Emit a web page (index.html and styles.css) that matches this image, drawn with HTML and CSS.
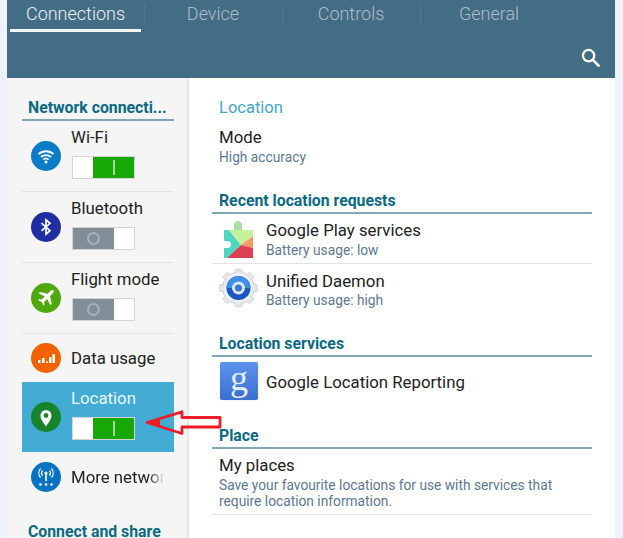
FILE: index.html
```html
<!DOCTYPE html>
<html lang="en">
<head>
<meta charset="utf-8">
<title>Settings</title>
<link rel="stylesheet" href="styles.css">
</head>
<body>
<div class="app">
  <header class="header">
    <nav class="tabs">
      <div class="tab active">Connections</div>
      <div class="tab">Device</div>
      <div class="tab">Controls</div>
      <div class="tab">General</div>
    </nav>
    <div class="tools">
      <svg class="search" viewBox="0 0 20 20" width="19" height="19"><circle cx="8" cy="8" r="6" fill="none" stroke="#fff" stroke-width="2.400"/><path d="M12.500 12.500L18.500 18.500" stroke="#fff" stroke-width="2.800" stroke-linecap="round"/></svg>
    </div>
  </header>
  <div class="main">
    <aside class="side">
      <h2 class="side-head">Network connecti...</h2>
      <div class="row border">
        <span class="ic wifi"><svg viewBox="0 0 30 30" width="30" height="30"><g fill="none" stroke="#fff" stroke-width="1.800"><path d="M7.500 13.200a11 11 0 0 1 15 0"/><path d="M10 16a7.400 7.400 0 0 1 10 0"/><path d="M12.400 18.600a3.800 3.800 0 0 1 5.200 0"/></g><circle cx="15" cy="21" r="1.500" fill="#fff"/></svg></span>
        <div class="col"><div class="name">Wi-Fi</div><div class="sw on"><i class="knob"></i><i class="track"><b class="bar"></b></i></div></div>
      </div>
      <div class="row border">
        <span class="ic bt"><svg viewBox="0 0 30 30" width="30" height="30"><path d="M10.500 11.200L19 18.700L15 22.200V7.800L19 11.300L10.500 18.800" fill="none" stroke="#fff" stroke-width="1.700"/></svg></span>
        <div class="col"><div class="name">Bluetooth</div><div class="sw off"><i class="track"><b class="ring"></b></i><i class="knob"></i></div></div>
      </div>
      <div class="row border">
        <span class="ic fl"><svg viewBox="0 0 30 30" width="30" height="30"><path d="M22.500 7.200c-1-.6-2.300-.1-3.200.8l-2.700 2.700-7.700-1.700-1.300 1.300 6.200 3.300-3 3-2.700-.3-1 1 3.500 1.800 1.800 3.500 1-1-.3-2.700 3-3 3.300 6.200 1.300-1.300-1.700-7.700 2.700-2.700c.9-.9 1.400-2.200.8-3.200z" fill="#fff"/></svg></span>
        <div class="col"><div class="name">Flight mode</div><div class="sw off"><i class="track"><b class="ring"></b></i><i class="knob"></i></div></div>
      </div>
      <div class="row short">
        <span class="ic du"><svg viewBox="0 0 30 30" width="30" height="30"><g fill="#fff"><rect x="7" y="17" width="2.500" height="3"/><rect x="11" y="15" width="2.500" height="5"/><rect x="15" y="18.500" width="2" height="1.500"/><rect x="18" y="14" width="2.500" height="6"/><rect x="21.500" y="11" width="2.500" height="9"/></g></svg></span>
        <div class="name">Data usage</div>
      </div>
      <div class="row tall selected">
        <span class="ic loc"><svg viewBox="0 0 30 30" width="30" height="30"><path d="M15 24.500C12.500 20.500 9.500 17.500 9.500 13.500a5.500 5.500 0 0 1 11 0C20.500 17.500 17.500 20.500 15 24.500z" fill="#fff"/><circle cx="15" cy="13.500" r="2.400" fill="#15842a"/></svg></span>
        <div class="col"><div class="name">Location</div><div class="sw on"><i class="knob"></i><i class="track"><b class="bar"></b></i></div></div>
      </div>
      <div class="row short more">
        <span class="ic mn"><svg viewBox="0 0 30 30" width="30" height="30"><g fill="none" stroke="#fff" stroke-width="1.200"><path d="M11.500 13.500a4 4 0 0 1 0-5"/><path d="M18.500 8.500a4 4 0 0 1 0 5"/><path d="M9.500 15.500a7 7 0 0 1 0-9"/><path d="M20.500 6.500a7 7 0 0 1 0 9"/><path d="M15 11v8" stroke-width="1.600"/></g><circle cx="15" cy="11" r="1.600" fill="#fff"/><g fill="#fff"><circle cx="9.500" cy="22.500" r="1.300"/><circle cx="15" cy="22.500" r="1.300"/><circle cx="20.500" cy="22.500" r="1.300"/></g></svg></span>
        <div class="name clip">More networks</div>
      </div>
      <h2 class="side-head second">Connect and share</h2>
    </aside>
    <section class="content">
      <div class="page-title">Location</div>
      <div class="plain mode"><div class="name">Mode</div><div class="sub">High accuracy</div></div>
      <h3 class="sec recent">Recent location requests</h3>
      <div class="app-row border first">
        <svg class="app-ic play" viewBox="0 0 30 38" width="30" height="38"><defs><clipPath id="puzzle"><path d="M0 10h10V5c0-2.200 1.800-4 4-4s4 1.800 4 4v5h11v28H0V28h3.500c2 0 3.500-1.500 3.500-3.500S5.500 21 3.500 21H0z"/></clipPath></defs><g clip-path="url(#puzzle)"><rect width="30" height="11" fill="#a9e2a0"/><path d="M0 10h5l12 15L3 38H0z" fill="#4fd6be"/><path d="M5 10h24v6L17 25z" fill="#c6f09a"/><path d="M17 25l12-9v12z" fill="#f49b5f"/><path d="M17 25l12 3v10H3z" fill="#dd3f55"/></g></svg>
        <div><div class="name">Google Play services</div><div class="sub">Battery usage: low</div></div>
      </div>
      <div class="app-row">
        <svg class="app-ic gear" viewBox="0 0 40 40" width="41" height="40"><g fill="#e3e6ea" stroke="#bfc6cd" stroke-width=".6"><circle cx="20" cy="20" r="16"/><rect x="16.500" y="1" width="7" height="7" rx="1.500"/><rect x="16.500" y="32" width="7" height="7" rx="1.500"/><rect x="1" y="16.500" width="7" height="7" rx="1.500"/><rect x="32" y="16.500" width="7" height="7" rx="1.500"/><g transform="rotate(45 20 20)"><rect x="16.500" y="1" width="7" height="7" rx="1.500"/><rect x="16.500" y="32" width="7" height="7" rx="1.500"/><rect x="1" y="16.500" width="7" height="7" rx="1.500"/><rect x="32" y="16.500" width="7" height="7" rx="1.500"/></g></g><circle cx="20" cy="20" r="15" fill="#eef0f3"/><circle cx="20" cy="20" r="12" fill="#1c55c4"/><path d="M8 20a12 12 0 0 1 24 0z" fill="#3d8fe8"/><circle cx="20" cy="20" r="6.500" fill="#dfe8f2"/><circle cx="20" cy="20" r="3.500" fill="#3a78d0"/></svg>
        <div><div class="name">Unified Daemon</div><div class="sub">Battery usage: high</div></div>
      </div>
      <h3 class="sec services">Location services</h3>
      <div class="app-row single">
        <span class="gbox"><span class="g">g</span></span>
        <div class="name">Google Location Reporting</div>
      </div>
      <h3 class="sec place">Place</h3>
      <div class="plain places border"><div class="name">My places</div><div class="sub dense">Save your favourite locations for use with services that require location information.</div></div>
    </section>
  </div>
</div>
<svg class="arrow" viewBox="0 0 80 26" width="80" height="26"><path d="M3 12.500L38 1.800V7.500H76V17H38V23.500z" fill="none" stroke="#ee1c25" stroke-width="2.800" stroke-linejoin="round"/><path d="M3 12.500L16 8.500V16.500z" fill="#ee1c25"/></svg>
</body>
</html>
```
FILE: styles.css
```css
* { box-sizing: border-box; }
html, body { margin: 0; height: 538px; overflow: hidden; }
body { background: #edf2fb; font-family: Roboto, "Liberation Sans", sans-serif; color: #222; position: relative; }
.app { width: 608px; margin-left: 7px; height: 538px; display: flex; flex-direction: column; background: #fff; overflow: hidden; }
.header { height: 78px; background: #436c85; flex: none; padding-left: 3px; }
.tabs { display: flex; height: 32px; }
.tab { width: 138px; padding-top: 3px; height: 32px; text-align: center; font-size: 18px; font-weight: 300; line-height: 22px; color: #b0bec8; background: linear-gradient(#52798f, #52798f) left 5px / 1px 19px no-repeat; }
.tab.active { width: 131px; color: #eef2f4; border-bottom: 3px solid #f4f7f8; margin-right: 3px; background: none; }
.tools { display: flex; justify-content: flex-end; padding: 16px 15px 0 0; }
.main { flex: 1; display: flex; min-height: 0; }
.side { width: 182px; flex: none; background: #f5f5f5; border-right: 2px solid #e6e6e6; padding: 0 13px 0 15px; }
.side-head { margin: 0; height: 43px; padding-top: 20px; font-size: 15.800px; line-height: 20px; font-weight: 700; color: #0a6a84; border-bottom: 2px solid #7fa7b8; padding-left: 6px; white-space: nowrap; }
.side-head.second { border: 0; height: auto; padding-top: 24px; line-height: 13px; }
.row { display: flex; align-items: center; gap: 10px; padding-left: 9px; }
.tall { height: 70px; }
.short { height: 48px; }
.border { border-bottom: 1px solid #e2e2e2; }
.side .border { height: 71px; }
.selected { background: #42acd4; }
.selected .name { color: #e9f5fa; }
.more { margin-top: 1px; }
.ic { width: 30px; height: 30px; border-radius: 50%; flex: none; display: block; }
.ic svg { display: block; }
.wifi { background: #0a7cc7; }
.bt { background: #1f2fa3; }
.fl { background: #4fa80c; }
.du { background: #f26300; }
.loc { background: #15842a; }
.mn { background: #0a72c4; }
.col { display: flex; flex-direction: column; gap: 9px; margin-bottom: 6px; }
.name { font-size: 16.800px; line-height: 20px; color: #222; white-space: nowrap; }
.clip { width: 94px; overflow: hidden; -webkit-mask-image: linear-gradient(to right, #000 82%, transparent); mask-image: linear-gradient(to right, #000 82%, transparent); }
.sw { width: 63px; height: 23px; margin-left: 1px; display: flex; border: 1px solid #d4d4d4; }
.knob { width: 20px; background: #fff; display: block; flex: none; }
.track { flex: 1; display: flex; align-items: center; justify-content: center; }
.on .track { background: #17a806; }
.off .track { background: #818e98; }
.bar { width: 2px; height: 15px; background: #9fdc8e; display: block; }
.ring { width: 13px; height: 13px; border: 2px solid #a9b2b9; border-radius: 50%; display: block; }
.content { flex: 1; padding: 0 23px; min-width: 0; }
.page-title { font-size: 16.500px; line-height: 20px; color: #42a6cf; margin: 20px 0 0 7px; }
.plain { padding-left: 7px; }
.mode { margin-top: 9px; }
.sub { font-size: 13.750px; line-height: 17px; margin-top: 1px; color: #5d7890; }
.mode .sub { margin-top: 2px; }
.sec { margin: 0; font-size: 15.800px; line-height: 20px; font-weight: 700; color: #0a6a84; border-bottom: 2px solid #7fa7b8; padding: 0 0 1px 7px; }
.recent { margin-top: 25px; }
.services { margin-top: 21px; }
.place { margin-top: 19px; }
.app-row { display: flex; align-items: center; height: 49px; padding-top: 2px; }
.app-row.border { height: 50px; }
.first .sub { margin-top: 2px; }
.app-ic { flex: none; display: block; }
.play { margin: -2px 12px 0 12px; }
.gear { margin: -3px 7px 0 6px; }
.single { height: 50px; padding-top: 0; }
.gbox { width: 38px; height: 38px; margin: -2px 8px 0 8px; flex: none; border-radius: 2px; background: linear-gradient(#5c93ec, #3b6fd0); display: flex; align-items: center; justify-content: center; box-shadow: 0 0 1px #9ab; }
.g { font-family: "Liberation Serif", serif; font-size: 36px; line-height: 30px; color: #e8eef8; position: relative; top: -3px; }
.places { margin-top: 6px; padding-bottom: 5px; }
.places .sub { margin-top: 2px; }
.dense { line-height: 16px; width: 350px; }
.arrow { position: absolute; left: 144px; top: 410px; }
```
